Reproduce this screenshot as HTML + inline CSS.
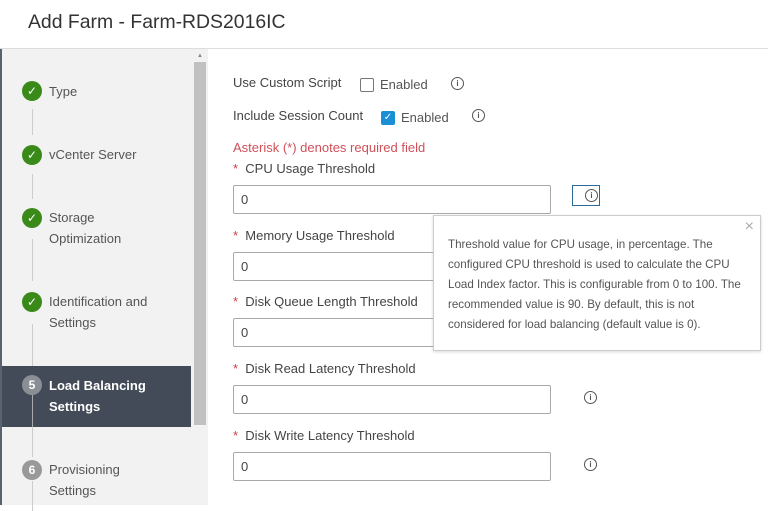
<!DOCTYPE html>
<html><head><style>
body{margin:0;width:768px;height:505px;overflow:hidden;background:#fff;font-family:"Liberation Sans",sans-serif;position:relative;color:#444}
.a{position:absolute}
.hdr{left:0;top:0;width:768px;height:48px;border-bottom:1px solid #ddd;background:#fff}
.hdr span{position:absolute;left:28px;top:11px;font-size:19.4px;color:#333}
.side{left:0;top:49px;width:206px;height:456px;background:#f2f2f2;border-left:2px solid #5a6270}
.st{position:absolute;left:20px;width:20px;height:20px;border-radius:50%;background:#3a8a1a;color:#fff;font-size:12px;text-align:center;line-height:20px}
.lbl{position:absolute;left:47px;font-size:13px;color:#555;line-height:21px}
.ln{position:absolute;left:30px;width:1px;background:#ccc}
.f{font-size:13px;color:#444}
.inp{position:absolute;left:233px;border:1px solid #aaa;border-radius:2px;font-size:13px;line-height:27px;padding-left:7px;box-sizing:border-box;width:318px;height:29px}
.req{color:#c44}
.info{position:absolute;width:11px;height:11px;border:1px solid #555;border-radius:50%;font-size:8px;line-height:11px;text-align:center;color:#555;font-weight:bold}
</style></head><body>
<div class="a hdr"><span>Add Farm - Farm-RDS2016IC</span></div>
<div class="a side">
 <div class="ln" style="top:60px;height:26px"></div>
 <div class="ln" style="top:125px;height:25px"></div>
 <div class="ln" style="top:190px;height:42px"></div>
 <div class="ln" style="top:275px;height:42px"></div>
 <div class="ln" style="top:378px;height:30px"></div>
 <div class="ln" style="top:432px;height:30px"></div>
 <div class="st" style="top:32px">✓</div><div class="lbl" style="top:32px">Type</div>
 <div class="st" style="top:96px">✓</div><div class="lbl" style="top:95px">vCenter Server</div>
 <div class="st" style="top:159px">✓</div><div class="lbl" style="top:158px">Storage<br>Optimization</div>
 <div class="st" style="top:243px">✓</div><div class="lbl" style="top:242px">Identification and<br>Settings</div>
 <div style="position:absolute;left:0;top:317px;width:189px;height:61px;background:#424b57"></div>
 <div class="ln" style="top:345px;height:33px;background:#aaa"></div>
 <div class="st" style="top:326px;background:#8a8f96;font-weight:bold">5</div><div class="lbl" style="top:326px;color:#fff;font-weight:bold">Load Balancing<br>Settings</div>
 <div class="st" style="top:411px;background:#999;font-weight:bold">6</div><div class="lbl" style="top:410px">Provisioning<br>Settings</div>
 <div style="position:absolute;left:192px;top:13px;width:12px;height:363px;background:#c1c1c1"></div>
 <div style="position:absolute;left:195px;top:4px;font-size:6px;color:#888">▲</div>
</div>
<div class="a f" style="left:233px;top:75px">Use Custom Script</div>
<div class="a" style="left:360px;top:78px;width:12px;height:12px;border:1px solid #777;border-radius:2px"></div>
<div class="a f" style="left:380px;top:77px;color:#555">Enabled</div>
<div class="info" style="left:451px;top:77px">i</div>
<div class="a f" style="left:233px;top:108px">Include Session Count</div>
<div class="a" style="left:381px;top:111px;width:14px;height:14px;background:#1a8fd6;border-radius:2px;color:#fff;font-size:10px;text-align:center;line-height:14px">✓</div>
<div class="a f" style="left:401px;top:110px;color:#555">Enabled</div>
<div class="info" style="left:472px;top:109px">i</div>
<div class="a f" style="left:233px;top:140px;color:#d0505a">Asterisk (*) denotes required field</div>
<div class="a f" style="left:233px;top:161px"><span class="req">*</span>&nbsp; CPU Usage Threshold</div>
<div class="inp" style="top:185px">0</div>
<div class="a" style="left:572px;top:185px;width:28px;height:21px;border:1px solid #2a6a9a;box-sizing:border-box"></div>
<div class="info" style="left:585px;top:189px">i</div>
<div class="a f" style="left:233px;top:228px"><span class="req">*</span>&nbsp; Memory Usage Threshold</div>
<div class="inp" style="top:252px">0</div>
<div class="a f" style="left:233px;top:294px"><span class="req">*</span>&nbsp; Disk Queue Length Threshold</div>
<div class="inp" style="top:318px">0</div>
<div class="a f" style="left:233px;top:361px"><span class="req">*</span>&nbsp; Disk Read Latency Threshold</div>
<div class="inp" style="top:385px">0</div>
<div class="info" style="left:584px;top:391px">i</div>
<div class="a f" style="left:233px;top:428px"><span class="req">*</span>&nbsp; Disk Write Latency Threshold</div>
<div class="inp" style="top:452px">0</div>
<div class="info" style="left:584px;top:458px">i</div>
<div class="a" style="left:433px;top:215px;width:328px;height:136px;background:#fff;border:1px solid #ccc;box-sizing:border-box;box-shadow:0 1px 3px rgba(0,0,0,.15)">
 <div style="position:absolute;right:6px;top:2px;font-size:16px;color:#aaa">×</div>
 <div style="position:absolute;left:14px;top:19px;white-space:nowrap;font-size:11.6px;line-height:20px;color:#555">Threshold value for CPU usage, in percentage. The<br>configured CPU threshold is used to calculate the CPU<br>Load Index factor. This is configurable from 0 to 100. The<br>recommended value is 90. By default, this is not<br>considered for load balancing (default value is 0).</div>
</div>
</body></html>
